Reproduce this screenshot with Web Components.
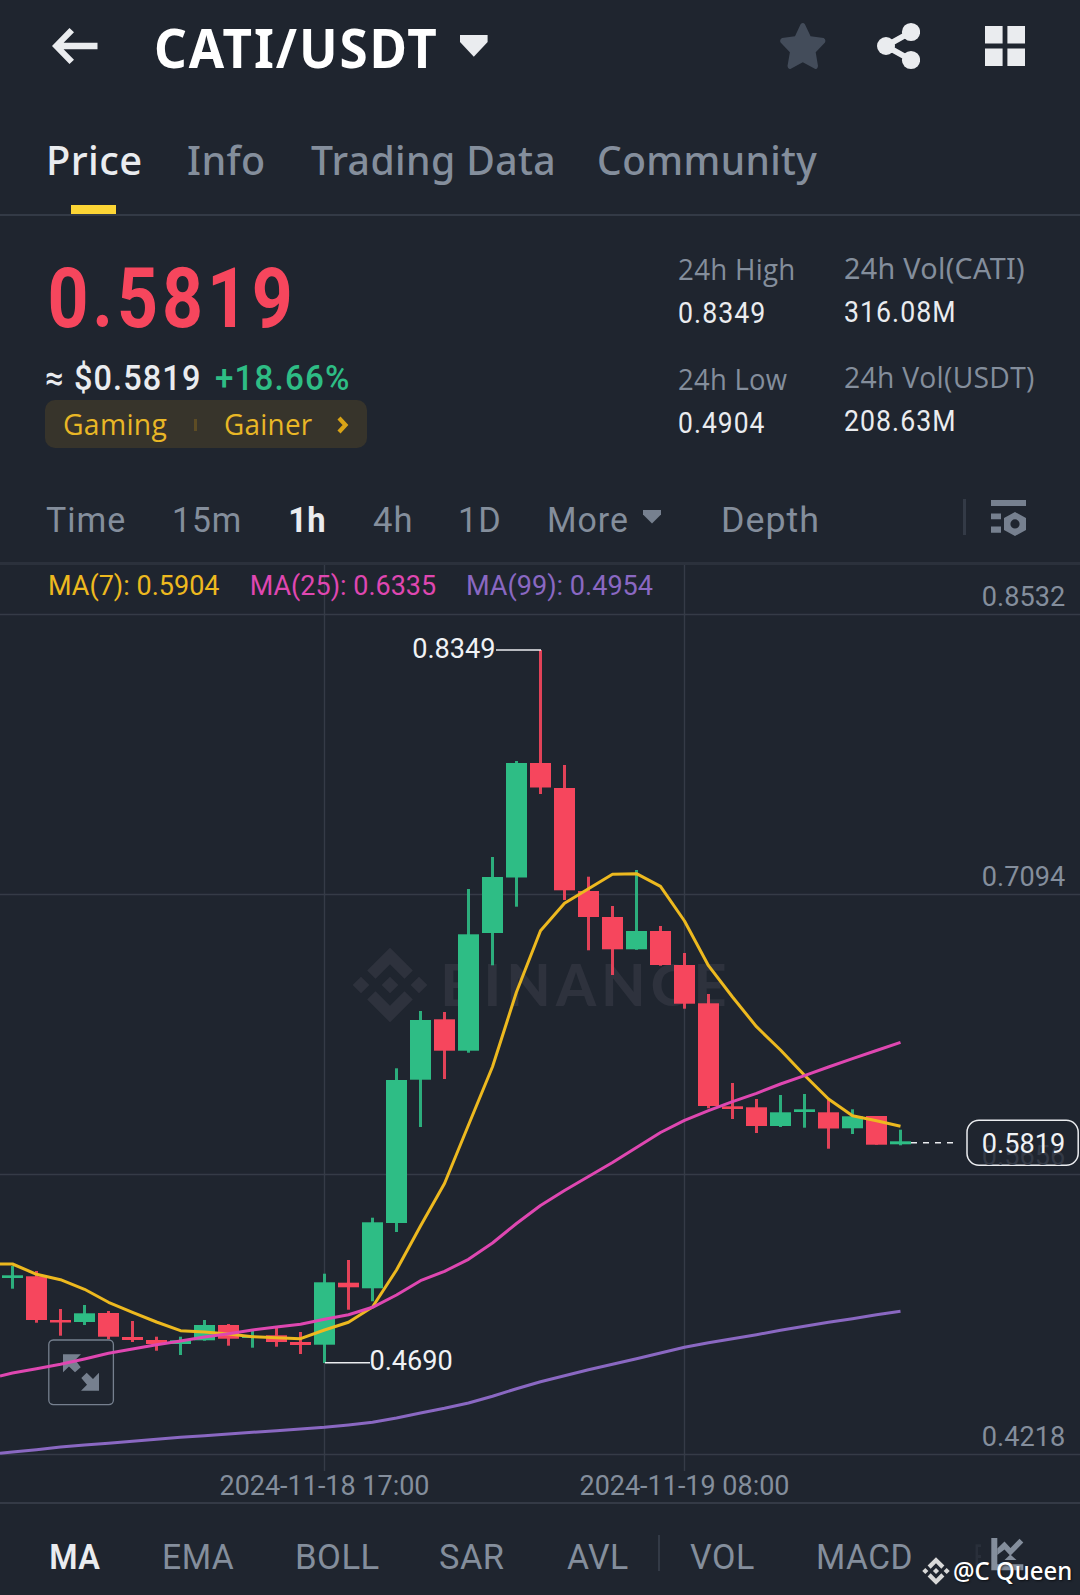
<!DOCTYPE html>
<html lang="en">
<head>
<meta charset="UTF-8">
<title>CATI/USDT</title>
<style>
  html, body {
    margin: 0;
    background: #1f252f;
  }
  body {
    width: 1080px;
    height: 1595px;
    overflow: hidden;
    font-family: Roboto, "Liberation Sans", sans-serif;
    color: #eaecef;
  }
</style>
</head>
<body>
<trading-app></trading-app>

<script>
// Full page: stacks the sections of the market screen
class TradingApp extends HTMLElement {
  constructor() {
    super();
    this.attachShadow({ mode: 'open' });
    this.shadowRoot.innerHTML = `
      <style>
        :host {
          display: flex;
          flex-direction: column;
          width: 1080px;
          height: 1595px;
          overflow: hidden;
          background: #1f252f;
        }
      </style>
      <market-header><fit-text w="280">CATI/USDT</fit-text></market-header>
      <page-tabs></page-tabs>
      <ticker-summary></ticker-summary>
      <interval-bar></interval-bar>
      <price-chart></price-chart>
      <indicator-bar></indicator-bar>
      <user-mark><fit-text w="116.5">@C Queen</fit-text></user-mark>
    `;
  }
}

class MarketHeader extends HTMLElement {
  constructor() {
    super();
    this.attachShadow({ mode: 'open' });
    this.shadowRoot.innerHTML = `
      <style>
        :host {
          display: flex;
          align-items: center;
          height: 92px;
          padding: 0 55px 0 52px;
          box-sizing: border-box;
          fill: #eaecef;
          color: #fff;
          font: 700 53.6px "Noto Sans", sans-serif;
          letter-spacing: 2px;
        }
        svg { display: block; flex: none; }
        .title { margin: 6px 24px 0 57.5px; }
        .star { margin-left: auto; fill: #434c5a; }
        .share { margin: 0 65px 0 51px; }
      </style>
      <svg width="46" height="36" viewBox="0 0 46 36">
        <path d="M0 18 17.5 0 22 4.3 11.6 14.8H45.5V21.2H11.6L22 31.7 17.5 36Z"/>
      </svg>
      <div class="title"><slot></slot></div>
      <svg width="28" height="22" viewBox="0 0 28 22">
        <path d="M0 0H27.6V7L13.8 21.7 0 7Z"/>
      </svg>
      <svg class="star" width="46" height="46" viewBox="0 0 46 46">
        <path d="M20.6 1.2Q23 -1 24.9 1.2L30.6 13.3 43.7 15Q46.2 16.5 45 19.5L35.7 29.3 38 43Q37.5 46.5 35.3 46L22.8 39.3 10.4 46Q7.7 46.3 7.5 43L9.9 29.3 .6 19.5Q-.8 16.5 2 15L15 13.3Z"/>
      </svg>
      <svg class="share" width="43" height="48" viewBox="0 0 43 48">
        <path d="M34 10 9 24 34 38" fill="none" stroke="#eaecef" stroke-width="6"/>
        <circle cx="9" cy="24" r="9"/>
        <circle cx="34" cy="10" r="9.1"/>
        <circle cx="34" cy="38" r="9.1"/>
      </svg>
      <svg width="40" height="40" viewBox="0 0 40 40">
        <path d="M0 0H17.6V17.6H0ZM22.4 0H40V17.6H22.4ZM0 22.4H17.6V40H0ZM22.4 22.4H40V40H22.4Z"/>
      </svg>
    `;
  }
}

class PageTabs extends HTMLElement {
  constructor() {
    super();
    this.attachShadow({ mode: 'open' });
    this.shadowRoot.innerHTML = `
      <style>
        :host {
          display: flex;
          height: 124px;
          padding: 55px 0 0 49px;
          box-sizing: border-box;
          border-bottom: 2px solid #333a46;
          color: #848e9c;
          font: 500 40.3px "Noto Sans", sans-serif;
          letter-spacing: 0.4px;
        }
        .tab + .tab { margin-left: 47px; }
        .tab.active { color: #eaecef; }
        .tab.active::after {
          content: "";
          display: block;
          width: 45px;
          height: 9px;
          margin: 29.2px 0 0 22px;
          background: #fcd535;
        }
      </style>
      <div class="tab active"><fit-text w="92">Price</fit-text></div>
      <div class="tab"><fit-text w="75.5">Info</fit-text></div>
      <div class="tab"><fit-text w="241.8">Trading Data</fit-text></div>
      <div class="tab"><fit-text w="218.5">Community</fit-text></div>
    `;
  }
}

class TickerSummary extends HTMLElement {
  constructor() {
    super();
    this.attachShadow({ mode: 'open' });
    this.shadowRoot.innerHTML = `
      <style>
        :host {
          display: flex;
          height: 250px;
          box-sizing: border-box;
          padding-left: 45px;
        }
        .left { width: 633.6px; padding-top: 52.5px; }
        .price {
          margin-left: 5px;
          color: #f6465d;
          font: 700 82.5px Roboto, sans-serif;
          letter-spacing: 4.5px;
        }
        .sub {
          display: flex;
          gap: 17.5px;
          margin: 39px 0 0 1px;
          font: 500 34.8px Roboto, sans-serif;
          letter-spacing: 1.2px;
        }
        .up { color: #2ebd85; }
        .tags {
          display: flex;
          align-items: center;
          width: 322px;
          height: 48px;
          margin-top: 9px;
          padding: 1.6px 0 0 19px;
          box-sizing: border-box;
          border-radius: 10px;
          background: #37342b;
          color: #e9b726;
          font: 400 28.6px "Open Sans", sans-serif;
          letter-spacing: 0.3px;
        }
        .tags i { width: 3px; height: 12px; margin: 0 28px 0 27.5px; background: #5d4c24; }
        .tags svg { margin-left: 24.8px; }
        .col { padding-top: 43.2px; width: 166px; }
        .col + .col { padding-top: 42.2px; }
        .label {
          color: #848e9c;
          font: 400 29px "Open Sans", sans-serif;
          letter-spacing: 0.3px;
        }
        .label.i { font-family: "Noto Sans", sans-serif; }
        .value {
          margin: 23.5px 0 45.1px;
          font: 400 28.8px Roboto, sans-serif;
          letter-spacing: 1.1px;
        }
        .col + .col .value { margin: 22.8px 0 44.9px; }
      </style>
      <div class="left">
        <div class="price"><fit-text w="240">0.5819</fit-text></div>
        <div class="sub">
          <fit-text w="152.7">≈ $0.5819</fit-text>
          <fit-text class="up" w="132.8">+18.66%</fit-text>
        </div>
        <div class="tags">
          <fit-text w="102.3">Gaming</fit-text><i></i><fit-text w="87.5">Gainer</fit-text>
          <svg width="12" height="18" viewBox="0 0 12 18">
            <path d="M2 2 8.5 9 2 16" fill="none" stroke="#d9a316" stroke-width="4.2"/>
          </svg>
        </div>
      </div>
      <div class="col">
        <div class="label"><fit-text w="114.6">24h High</fit-text></div>
        <div class="value"><fit-text w="85.2">0.8349</fit-text></div>
        <div class="label"><fit-text w="108.6">24h Low</fit-text></div>
        <div class="value"><fit-text w="85.2">0.4904</fit-text></div>
      </div>
      <div class="col">
        <div class="label i"><fit-text w="179">24h Vol(CATI)</fit-text></div>
        <div class="value"><fit-text w="108.5">316.08M</fit-text></div>
        <div class="label"><fit-text w="188.8">24h Vol(USDT)</fit-text></div>
        <div class="value"><fit-text w="108.5">208.63M</fit-text></div>
      </div>
    `;
  }
}

class IntervalBar extends HTMLElement {
  constructor() {
    super();
    this.attachShadow({ mode: 'open' });
    this.shadowRoot.innerHTML = `
      <style>
        :host {
          display: flex;
          height: 99px;
          padding: 41.2px 54px 0 45.6px;
          box-sizing: border-box;
          border-bottom: 3px solid #2b313c;
          color: #848e9c;
          font: 400 35px Roboto, sans-serif;
          letter-spacing: 1px;
        }
        .on { color: #eaecef; font-weight: 700; letter-spacing: 0.5px; }
        svg { display: block; fill: #76808f; }
        i { width: 3px; height: 36px; margin: -8px 25px 0 auto; background: #333a46; }
      </style>
      <fit-text w="78.6">Time</fit-text>
      <fit-text w="65.6" style="margin-left:50.2px">15m</fit-text>
      <fit-text class="on" w="34.2" style="margin-left:50.2px">1h</fit-text>
      <fit-text w="37.2" style="margin-left:48.2px">4h</fit-text>
      <fit-text w="38.8" style="margin-left:50.2px">1D</fit-text>
      <fit-text w="78.4" style="margin-left:50.3px">More</fit-text>
      <svg width="18" height="14" viewBox="0 0 18 14" style="margin:2.8px 0 0 15.5px"><path d="M0 0H18V4.5L9 13.5 0 4.5Z"/></svg>
      <fit-text w="93.7" style="margin-left:61.8px">Depth</fit-text>
      <i></i>
      <svg width="35" height="36" viewBox="0 0 35 36" style="margin-top:-6.8px">
        <path d="M0 0H35V6H0ZM0 13.6H10V19.3H0ZM0 26.6H10V32.8H0Z"/>
        <path fill-rule="evenodd" d="M24 12 35 18V30L24 36 13 30V18ZM24 19.3A4.6 4.6 0 1 0 24 28.5 4.6 4.6 0 1 0 24 19.3Z"/>
      </svg>
    `;
  }
}

// [direction, high, low, body top, body bottom] in page pixels
const CANDLES = [
  ['u', 1266, 1288.7, 1275.3, 1278], ['d', 1271, 1322.7, 1276.3, 1320],
  ['d', 1309, 1335.7, 1320, 1322.5], ['u', 1305, 1325, 1313.3, 1322],
  ['d', 1311, 1339.3, 1313, 1336.7], ['d', 1321, 1342, 1337, 1340],
  ['d', 1336.7, 1350.7, 1340, 1344], ['u', 1336.7, 1355, 1340.3, 1344],
  ['u', 1320, 1340.7, 1325, 1340.3], ['d', 1324, 1345.7, 1325, 1338.7],
  ['u', 1331, 1347.7, 1336, 1338], ['d', 1327.7, 1346.7, 1335.3, 1342],
  ['d', 1332, 1354, 1342, 1345], ['u', 1273.7, 1363, 1282.3, 1344.7],
  ['d', 1260, 1309.7, 1282.7, 1287.3], ['u', 1217.7, 1301.3, 1222.3, 1288.3],
  ['u', 1068.3, 1232, 1080, 1223], ['u', 1011, 1127, 1020, 1079.7],
  ['d', 1012, 1079, 1019.3, 1050.7], ['u', 889, 1052.7, 934.3, 1050.7],
  ['u', 857, 965.3, 877, 933], ['u', 761, 906.7, 763, 877.5],
  ['d', 650, 794, 763, 787.5], ['d', 765, 900, 788, 890.3],
  ['d', 876.7, 950.3, 891, 917], ['d', 906, 975, 917, 949.3],
  ['u', 870, 949.8, 931, 949.3], ['d', 926, 965.7, 931, 965],
  ['d', 953, 1008.7, 965, 1003.7], ['d', 994, 1108.3, 1003.3, 1106],
  ['d', 1083, 1119, 1106.3, 1109], ['d', 1099, 1133, 1107.3, 1126],
  ['u', 1095, 1127, 1112.3, 1126], ['u', 1094, 1127.7, 1109.3, 1112],
  ['d', 1099.7, 1148.7, 1112.3, 1128.5], ['u', 1109.3, 1134, 1116.3, 1128.3],
  ['d', 1116, 1144.7, 1116, 1144.7], ['u', 1129.7, 1145.3, 1141.3, 1144.3]
];

// First value sits on the left edge, the rest on the candle centres
const MA7 = [1264, 1264, 1274.3, 1279.7, 1289.3, 1302.3, 1312.3, 1322, 1330.7, 1332, 1334,
  1336.7, 1337.7, 1338.7, 1330, 1322.3, 1307, 1270, 1226, 1183.5, 1125, 1066.7, 992, 930.7,
  903.3, 888.7, 874.3, 873.7, 886.3, 921, 965.7, 997, 1026.7, 1050, 1075.3, 1099, 1115.7,
  1120.7, 1126.3];
const MA25 = [1376, 1373, 1368.7, 1364.3, 1359, 1353.3, 1349, 1344.7, 1341, 1337, 1333.7,
  1330, 1327, 1324.3, 1319.3, 1314.7, 1307.3, 1295, 1280.7, 1271.3, 1259.3, 1243, 1223.5,
  1205.5, 1190.5, 1176.5, 1162.5, 1147.5, 1132.5, 1120.3, 1110.7, 1101.7, 1093.3, 1084,
  1075.7, 1067, 1058.7, 1050.5, 1042.3];
const MA99 = [1453.3, 1452, 1449.7, 1447, 1445, 1443.3, 1441.3, 1439.3, 1437.3, 1435.7, 1434,
  1432.3, 1430.7, 1429, 1427.3, 1425, 1422.3, 1418, 1413, 1408.3, 1403, 1396.3, 1388.7,
  1381.7, 1375.7, 1369.7, 1364.3, 1358.7, 1353, 1347.3, 1342.7, 1338.7, 1334.7, 1330.3,
  1326.3, 1322.3, 1318.7, 1314.7, 1311.3];

const centre = i => 12.5 + i * 24;

const candleSvg = ([dir, high, low, top, bottom], i) => `
  <g class="${dir}">
    <rect class="wick" x="${centre(i) - 1.5}" y="${high}" width="3" height="${low - high}"/>
    <rect x="${centre(i) - 10.5}" y="${top}" width="21" height="${bottom - top}"/>
  </g>`;

const linePoints = values =>
  values.map((y, i) => `${i === 0 ? 0 : centre(i - 1)},${y}`).join(' ');

const BINANCE_MARK = `
  <path d="M0-37.3 22.8-14.6 14.5-6.3 0-20.7-14.5-6.3-22.8-14.6Z
    M0 37.3 22.8 14.6 14.5 6.3 0 20.7-14.5 6.3-22.8 14.6Z
    M-29-8.3-20.7 0-29 8.3-37.3 0Z M29-8.3 37.3 0 29 8.3 20.7 0Z
    M0-8.3 8.3 0 0 8.3-8.3 0Z"/>`;

class PriceChart extends HTMLElement {
  constructor() {
    super();
    this.attachShadow({ mode: 'open' });
    this.shadowRoot.innerHTML = `
      <style>
        :host { display: block; height: 937px; }
        svg { display: block; font: 400 27px Roboto, sans-serif; }
        .grid { stroke: #353b47; stroke-width: 1.4; }
        .u { fill: #2ebd85; }
        .d { fill: #f6465d; }
        .wick { opacity: .9; }
        .ma { fill: none; stroke-width: 3; stroke-linejoin: round; }
        .axis { fill: #848e9c; }
        .note { fill: #f0f2f5; }
        .mark { fill: #2e323d; }
      </style>
      <svg width="1080" height="937" viewBox="0 565 1080 937">
        <g class="mark">
          <g transform="translate(390 985)">${BINANCE_MARK}</g>
          <text x="440.5" y="1006" font-family="Lato" font-weight="900" font-size="57" textLength="286" lengthAdjust="spacing">BINANCE</text>
        </g>
        <path class="grid" d="M0 614.5H1080M0 894.5H1080M0 1174.5H1080M0 1454.5H1080M324.5 565V1471M684.5 565V1471"/>

        <text x="48" y="595" fill="#edb91f" textLength="171.5" lengthAdjust="spacingAndGlyphs">MA(7): 0.5904</text>
        <text x="249.7" y="595" fill="#df47b1" textLength="186.5" lengthAdjust="spacingAndGlyphs">MA(25): 0.6335</text>
        <text x="466" y="595" fill="#8a68c2" textLength="187" lengthAdjust="spacingAndGlyphs">MA(99): 0.4954</text>

        <g class="axis">
          <text x="981.8" y="606" textLength="83.4" lengthAdjust="spacingAndGlyphs">0.8532</text>
          <text x="981.8" y="886" textLength="83.4" lengthAdjust="spacingAndGlyphs">0.7094</text>
          <text x="981.8" y="1446" textLength="83.4" lengthAdjust="spacingAndGlyphs">0.4218</text>
          <text x="219.5" y="1495" textLength="210" lengthAdjust="spacingAndGlyphs">2024-11-18 17:00</text>
          <text x="579.5" y="1495" textLength="210" lengthAdjust="spacingAndGlyphs">2024-11-19 08:00</text>
        </g>

        ${CANDLES.map(candleSvg).join('')}

        <rect x="48.8" y="1340" width="64.6" height="64.6" rx="4.5" fill="#1f252f" stroke="#76808f" stroke-width="1.3"/>
        <path fill="#76808f" d="M63 1354.3H81L75.3 1360 80.7 1367.3 75 1372.3 69 1366.5 63 1372.3Z
          M99 1390.7H81L87 1384.8 81.3 1378 86.7 1372.7 93 1379 99 1372.7Z"/>

        <polyline class="ma" stroke="#edb91f" points="${linePoints(MA7)}"/>
        <polyline class="ma" stroke="#df47b1" points="${linePoints(MA25)}"/>
        <polyline class="ma" stroke="#8a68c2" points="${linePoints(MA99)}"/>

        <g class="note">
          <text x="412.2" y="657.7" textLength="83.4" lengthAdjust="spacingAndGlyphs">0.8349</text>
          <text x="369.4" y="1370" textLength="83.4" lengthAdjust="spacingAndGlyphs">0.4690</text>
          <path d="M496 650H541M325 1362.7H370" stroke="#eaecef" stroke-width="1.6"/>
        </g>

        <path d="M911 1142.7H953" stroke="#eaecef" stroke-width="1.5" stroke-dasharray="6 6"/>
        <rect x="967" y="1120.2" width="111.2" height="45" rx="12" fill="#1f252f" stroke="#eaecef" stroke-width="1.5"/>
        <text x="981.8" y="1165" fill="#343a46" textLength="83.4" lengthAdjust="spacingAndGlyphs">0.5656</text>
        <text class="note" x="981.8" y="1152.7" textLength="83.4" lengthAdjust="spacingAndGlyphs">0.5819</text>
      </svg>
    `;
  }
}

class IndicatorBar extends HTMLElement {
  constructor() {
    super();
    this.attachShadow({ mode: 'open' });
    this.shadowRoot.innerHTML = `
      <style>
        :host {
          display: flex;
          height: 93px;
          padding: 40.3px 0 0 50.5px;
          box-sizing: border-box;
          border-top: 2px solid #343a46;
          color: #848e9c;
          font: 400 35px Roboto, sans-serif;
          letter-spacing: 0.5px;
        }
        .on { color: #eaecef; font-weight: 600; }
        i { width: 2px; height: 36px; margin: -9px 30.4px 0 30px; background: #333a46; }
        svg { display: block; }
      </style>
      <fit-text class="on" w="49.4">MA</fit-text>
      <fit-text w="69.9" style="margin-left:63.8px">EMA</fit-text>
      <fit-text w="81.4" style="margin-left:63.2px">BOLL</fit-text>
      <fit-text w="63.4" style="margin-left:61.9px">SAR</fit-text>
      <fit-text w="60.4" style="margin-left:64px">AVL</fit-text>
      <i></i>
      <fit-text w="63.4">VOL</fit-text>
      <fit-text w="92.6" style="margin-left:64.4px">MACD</fit-text>
      <svg width="50" height="33" viewBox="0 0 50 33" style="margin:-6.3px 0 0 64.5px">
        <path fill="#292f3a" d="M.5 6.3H6V9H3V17H6V20H3V29H.5Z"/>
        <g fill="#848e9c">
          <path d="M16.3 0H22.3V26.3H48.3V32.3H16.3Z"/>
          <path d="M22.3 17V10.5L29.5 3.5 35.5 10 44.5 .7 48.3 4.5 35.3 17.8 29.5 11.5Z"/>
          <path d="M35.3 16.5 41.5 22H29.5Z"/>
        </g>
      </svg>
    `;
  }
}

// Author signature floating over the lower right corner
class UserMark extends HTMLElement {
  constructor() {
    super();
    this.attachShadow({ mode: 'open' });
    this.shadowRoot.innerHTML = `
      <style>
        :host {
          position: absolute;
          left: 922px;
          top: 1557px;
          display: flex;
          align-items: center;
          gap: 4px;
          height: 28px;
          color: #fff;
          font: 500 25.2px "Noto Sans", sans-serif;
          text-shadow: 1px 1px 2px rgba(0, 0, 0, 0.6);
        }
        svg { display: block; fill: #d8d8d8; }
        slot { display: block; padding-top: 1.5px; }
      </style>
      <svg width="28" height="28" viewBox="-38 -38 76 76">${BINANCE_MARK}</svg>
      <slot></slot>
    `;
  }
}

// Text whose glyphs fill exactly "w" pixels; the box is as tall as the capitals
class FitText extends HTMLElement {
  constructor() {
    super();
    this.attachShadow({ mode: 'open' });
    this.shadowRoot.innerHTML = `
      <style>
        :host { display: block; flex: none; }
        span {
          display: block;
          width: max-content;
          line-height: 1;
          white-space: pre;
          transform-origin: 0 0;
        }
      </style>
      <span><slot></slot></span>
    `;
  }

  connectedCallback() {
    const style = getComputedStyle(this);
    const size = parseFloat(style.fontSize);
    const text = this.textContent.trim();
    const ctx = document.createElement('canvas').getContext('2d');
    ctx.font = `${style.fontWeight} ${size}px ${style.fontFamily}`;
    const box = ctx.measureText(text);
    const spacing = (parseFloat(style.letterSpacing) || 0) * (text.length - 1);
    const width = Number(this.getAttribute('w'));
    const scale = width / (box.actualBoundingBoxRight + box.actualBoundingBoxLeft + spacing);
    const cap = size * 0.713;
    const baseline = size / 2 + (box.fontBoundingBoxAscent - box.fontBoundingBoxDescent) / 2;
    this.style.width = `${width}px`;
    this.style.height = `${cap}px`;
    this.shadowRoot.querySelector('span').style.transform =
      `translate(${box.actualBoundingBoxLeft * scale}px, ${cap - baseline}px) scaleX(${scale})`;
  }
}

customElements.define('trading-app', TradingApp);
customElements.define('market-header', MarketHeader);
customElements.define('page-tabs', PageTabs);
customElements.define('ticker-summary', TickerSummary);
customElements.define('interval-bar', IntervalBar);
customElements.define('price-chart', PriceChart);
customElements.define('indicator-bar', IndicatorBar);
customElements.define('user-mark', UserMark);
customElements.define('fit-text', FitText);
</script>
</body>
</html>
